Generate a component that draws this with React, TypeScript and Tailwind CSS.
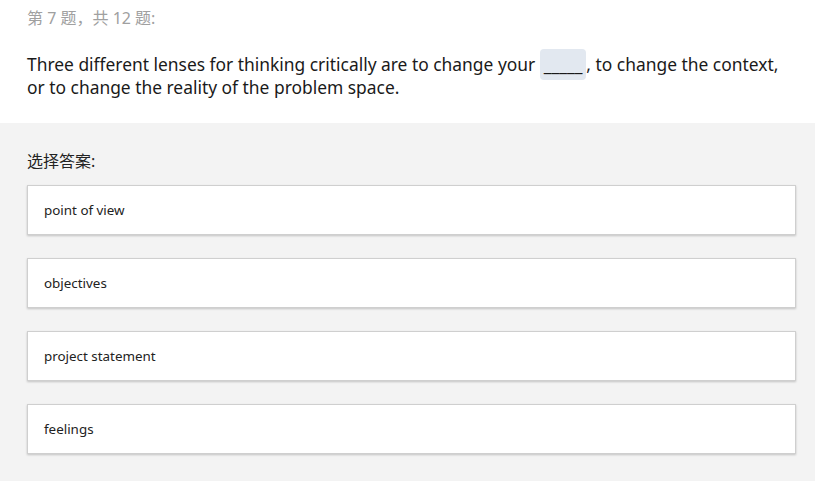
import React from 'react';

const options = ['point of view', 'objectives', 'project statement', 'feelings'];

export default function App() {
    return (
        <div className="w-[815px] h-[481px] overflow-hidden bg-[#f3f3f3]" style={{ fontFamily: '"Noto Sans", "Noto Sans CJK SC", sans-serif' }}>
            <div className="bg-white pl-[27px] pr-[19px] pt-[6px] h-[123px]">
                <div className="text-[16px] leading-[24px] text-[#a0a0a0]">第 7 题，共 12 题:</div>
                <p className="mt-[23px] text-[17.4px] leading-[23px] text-[#1a1a1a]">
                    Three different lenses for thinking critically are to change your{' '}
                    <span className="px-[4px] pt-[3px] pb-[4px] rounded-[4px] bg-[#e2e8f0]">_____</span>
                    , to change the context, or to change the reality of the problem space.
                </p>
            </div>
            <div className="pl-[27px] pr-[19px] pt-[26px]">
                <div className="text-[16px] leading-[24px] text-[#222]">选择答案:</div>
                <div className="mt-[12px] flex flex-col gap-[23px]">
                    {options.map((o) => (
                        <div key={o} className="h-[50px] bg-white border border-[#cfcfcf] shadow-[0_1px_2px_rgba(0,0,0,0.2)] flex items-center pl-[16px] text-[13.4px] text-[#222]">
                            {o}
                        </div>
                    ))}
                </div>
            </div>
        </div>
    );
}
